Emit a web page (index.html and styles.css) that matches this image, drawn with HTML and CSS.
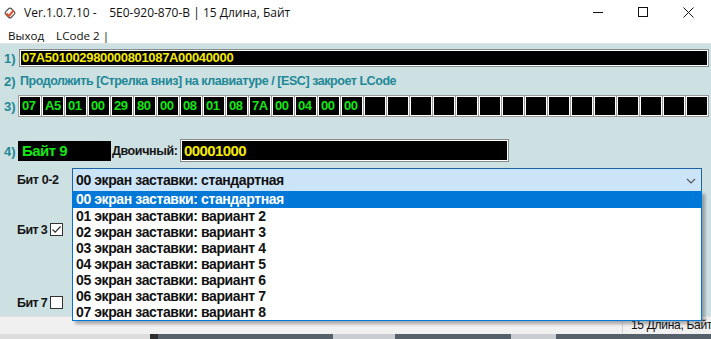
FILE: index.html
```html
<!DOCTYPE html>
<html lang="ru">

<head>
  <meta charset="UTF-8" />
  <title>LCode</title>
  <link rel="stylesheet" href="styles.css">
</head>

<body>
  <div class="window">
    <header class="titlebar">
      <svg class="app-icon" width="14" height="14" viewBox="0 0 14 14">
        <rect x="3" y="3" width="8" height="8" rx="2" transform="rotate(45 7 7)" fill="#fff" stroke="#555" stroke-width="1.2" />
        <path d="M3.5 7.5 L6 10 L10.5 4.5" fill="none" stroke="#e0502a" stroke-width="2" />
      </svg>
      <span class="title">Ver.1.0.7.10 -&nbsp;&nbsp;&nbsp; 5E0-920-870-B | 15 Длина, Байт</span>
      <div class="win-controls">
        <svg width="45" height="26" viewBox="0 0 45 26"><path d="M17 12.5 H27" stroke="#111" stroke-width="1" /></svg>
        <svg width="45" height="26" viewBox="0 0 45 26"><rect x="17.5" y="7.5" width="9" height="9" fill="none" stroke="#111" stroke-width="1" /></svg>
        <svg width="45" height="26" viewBox="0 0 45 26"><path d="M17.5 7.5 L27.5 17.5 M27.5 7.5 L17.5 17.5" stroke="#111" stroke-width="1" /></svg>
      </div>
    </header>

    <nav class="menubar">
      <span>Выход</span>
      <span>LCode 2 |</span>
    </nav>

    <main class="content">
      <div class="row row-code">
        <span class="num">1)</span>
        <div class="field code-field">07A501002980000801087A00040000</div>
      </div>

      <div class="row row-hint">
        <span class="num">2)</span>
        <span class="hint">Продолжить [Стрелка вниз] на клавиатуре / [ESC] закроет LCode</span>
      </div>

      <div class="row row-bytes">
        <span class="num">3)</span>
        <div class="cells" id="cells"></div>
      </div>

      <div class="row row-byte">
        <span class="num">4)</span>
        <div class="byte-box">Байт 9</div>
        <span class="bin-label">Двоичный:</span>
        <div class="field bin-field">00001000</div>
      </div>

      <div class="bit-row bit-combo">
        <span class="bit-label">Бит 0-2</span>
        <div class="combo">
          <span>00 экран заставки: стандартная</span>
          <svg class="chevron" width="10" height="6" viewBox="0 0 10 6"><path d="M1 1 L5 5 L9 1" fill="none" stroke="#555" stroke-width="1.1" /></svg>
          <ul class="dropdown">
            <li class="selected">00 экран заставки: стандартная</li>
            <li>01 экран заставки: вариант 2</li>
            <li>02 экран заставки: вариант 3</li>
            <li>03 экран заставки: вариант 4</li>
            <li>04 экран заставки: вариант 5</li>
            <li>05 экран заставки: вариант 6</li>
            <li>06 экран заставки: вариант 7</li>
            <li>07 экран заставки: вариант 8</li>
          </ul>
        </div>
      </div>

      <div class="bit-row bit-check bit-3">
        <span class="bit-label">Бит 3</span>
        <span class="checkbox">
          <svg width="11" height="11" viewBox="0 0 11 11"><path d="M1.5 5.5 L4.2 8.2 L9.5 2.5" fill="none" stroke="#333" stroke-width="1.2" /></svg>
        </span>
      </div>

      <div class="bit-row bit-check bit-7">
        <span class="bit-label">Бит 7</span>
        <span class="checkbox"></span>
      </div>
    </main>

    <footer class="statusbar">
      <span class="status-cell">15 Длина, Байт</span>
    </footer>

    <div class="taskstrip">
      <span class="seg light"></span>
      <span class="seg divider"></span>
      <span class="seg slate"></span>
      <span class="seg pale"></span>
      <span class="seg slate2"></span>
      <span class="seg pale2"></span>
      <span class="seg rest"></span>
    </div>
  </div>

  <script>
    // 15 bytes from the code, the rest of the 30 cells stay empty
    var bytes = ['07', 'A5', '01', '00', '29', '80', '00', '08', '01', '08', '7A', '00', '04', '00', '00'];
    var cells = document.getElementById('cells');
    for (var i = 0; i < 30; i++) {
      var c = document.createElement('div');
      c.className = 'cell';
      c.textContent = bytes[i] || '';
      cells.appendChild(c);
    }
  </script>
</body>

</html>
```

FILE: styles.css
```css
* {
  box-sizing: border-box;
}

body {
  margin: 0;
  width: 711px;
  height: 339px;
  overflow: hidden;
  font-family: "Liberation Sans", Arial, sans-serif;
  background: #cde0e2;
}

.window {
  width: 711px;
  height: 339px;
  display: flex;
  flex-direction: column;
}

/* title bar */
.titlebar {
  height: 26px;
  background: #fff;
  display: flex;
  align-items: center;
  padding-left: 3px;
}

.app-icon {
  flex-shrink: 0;
}

.title {
  margin-left: 7px;
  font-family: "Open Sans", "Noto Sans", sans-serif;
  font-size: 12px;
  color: #111;
  white-space: nowrap;
  padding-bottom: 2px;
}

.win-controls {
  margin-left: auto;
  display: flex;
  align-self: flex-start;
}

.win-controls svg {
  display: block;
}

/* menu */
.menubar {
  height: 18px;
  background: #fff;
  display: flex;
  gap: 12px;
  padding-left: 8px;
  padding-top: 2px;
  font-family: "Open Sans", "Noto Sans", sans-serif;
  font-size: 11.6px;
  color: #111;
  line-height: 16px;
  border-bottom: 1px solid #e4e4e4;
}

/* main panel */
.content {
  position: relative;
  height: 272px;
  background: #cde0e2;
  padding-top: 5px;
  font-weight: bold;
  font-size: 13px;
}

.row {
  display: flex;
  align-items: center;
}

.num {
  width: 19px;
  padding-left: 4px;
  color: #218896;
  flex-shrink: 0;
  font-size: 13px;
}

.field {
  background: #000;
  border: 1px solid #8a8a8a;
  box-shadow: inset 0 0 0 1px #fff;
  color: #f4ea06;
}

.code-field {
  width: 690px;
  height: 18px;
  line-height: 16px;
  padding-left: 2px;
  letter-spacing: -0.33px;
}

.row-hint {
  height: 18px;
  margin-top: 5px;
}

.hint {
  color: #218896;
  font-size: 12.5px;
  letter-spacing: -0.45px;
  margin-left: 1px;
}

.row-bytes {
  margin-top: 6px;
  height: 20px;
}

.cells {
  display: flex;
  gap: 1px;
}

.cell {
  width: 22px;
  height: 20px;
  background: #000;
  border: 1px solid #fff;
  box-shadow: 0 0 0 1px #9a9a9a;
  color: #14e614;
  line-height: 18px;
  padding-left: 2px;
  letter-spacing: -0.4px;
}

.row-byte {
  margin-top: 23px;
  height: 23px;
}

.row-byte .num {
  width: 18px;
  padding-top: 2px;
}

.byte-box {
  width: 93px;
  height: 20px;
  background: #000;
  color: #14e614;
  font-size: 15px;
  line-height: 20px;
  padding-left: 4px;
  letter-spacing: -0.5px;
}

.bin-label {
  margin-left: 1px;
  width: 68px;
  color: #151515;
  font-size: 12.5px;
  letter-spacing: -0.4px;
}

.bin-field {
  width: 329px;
  height: 23px;
  font-size: 15px;
  line-height: 21px;
  padding-left: 3px;
  letter-spacing: -0.6px;
}

/* bit rows */
.bit-row {
  display: flex;
  align-items: center;
  padding-left: 17px;
}

.bit-label {
  color: #151515;
  font-size: 12.5px;
  letter-spacing: -0.4px;
  width: 55px;
  flex-shrink: 0;
}

.bit-combo {
  margin-top: 6px;
  height: 24px;
}

.combo {
  position: relative;
  width: 630px;
  height: 24px;
  background: #cce4f7;
  border: 1px solid #1d63a8;
  display: flex;
  align-items: center;
  padding-left: 3px;
  color: #111;
  font-size: 14px;
  letter-spacing: -0.4px;
}

.chevron {
  position: absolute;
  right: 5px;
  top: 9px;
}

.dropdown {
  position: absolute;
  top: 22px;
  left: -1px;
  width: 630px;
  margin: 0;
  padding: 0;
  list-style: none;
  background: #fff;
  border: 1px solid #0078d7;
  border-top: none;
  box-shadow: 3px 3px 3px rgba(0, 0, 0, 0.3);
  z-index: 10;
}

.dropdown li {
  height: 16px;
  line-height: 16px;
  padding-left: 3px;
  color: #111;
}

.dropdown li.selected {
  background: #0078d7;
  color: #fff;
  height: 17px;
  line-height: 17px;
}

.bit-check .bit-label {
  width: 33px;
  letter-spacing: -0.6px;
}

.checkbox {
  width: 13px;
  height: 13px;
  border: 1px solid #333;
  background: #fff;
  display: flex;
  align-items: center;
  justify-content: center;
}

.bit-3 {
  margin-top: 31px;
  height: 13px;
}

.bit-7 {
  margin-top: 60px;
  height: 13px;
}

/* status bar */
.statusbar {
  height: 18px;
  background: #f0f0f0;
  display: flex;
  justify-content: flex-end;
  border-top: 1px solid #e2e2e2;
}

.status-cell {
  width: 89px;
  border-left: 1px solid #d4d4d4;
  font-size: 12px;
  letter-spacing: -0.3px;
  color: #111;
  line-height: 17px;
  padding-left: 8px;
  white-space: nowrap;
  overflow: hidden;
}

.taskstrip {
  flex: 1;
  display: flex;
}

.seg {
  display: block;
}

.seg.light { width: 150px; background: #dcdcdc; }
.seg.divider { width: 8px; background: #2e2e2e; }
.seg.slate { width: 175px; background: #56606b; }
.seg.pale { width: 62px; background: #c9cdd2; }
.seg.slate2 { width: 116px; background: #56606b; }
.seg.pale2 { width: 45px; background: #c9cdd2; }
.seg.rest { flex: 1; background: #56606b; }
```
